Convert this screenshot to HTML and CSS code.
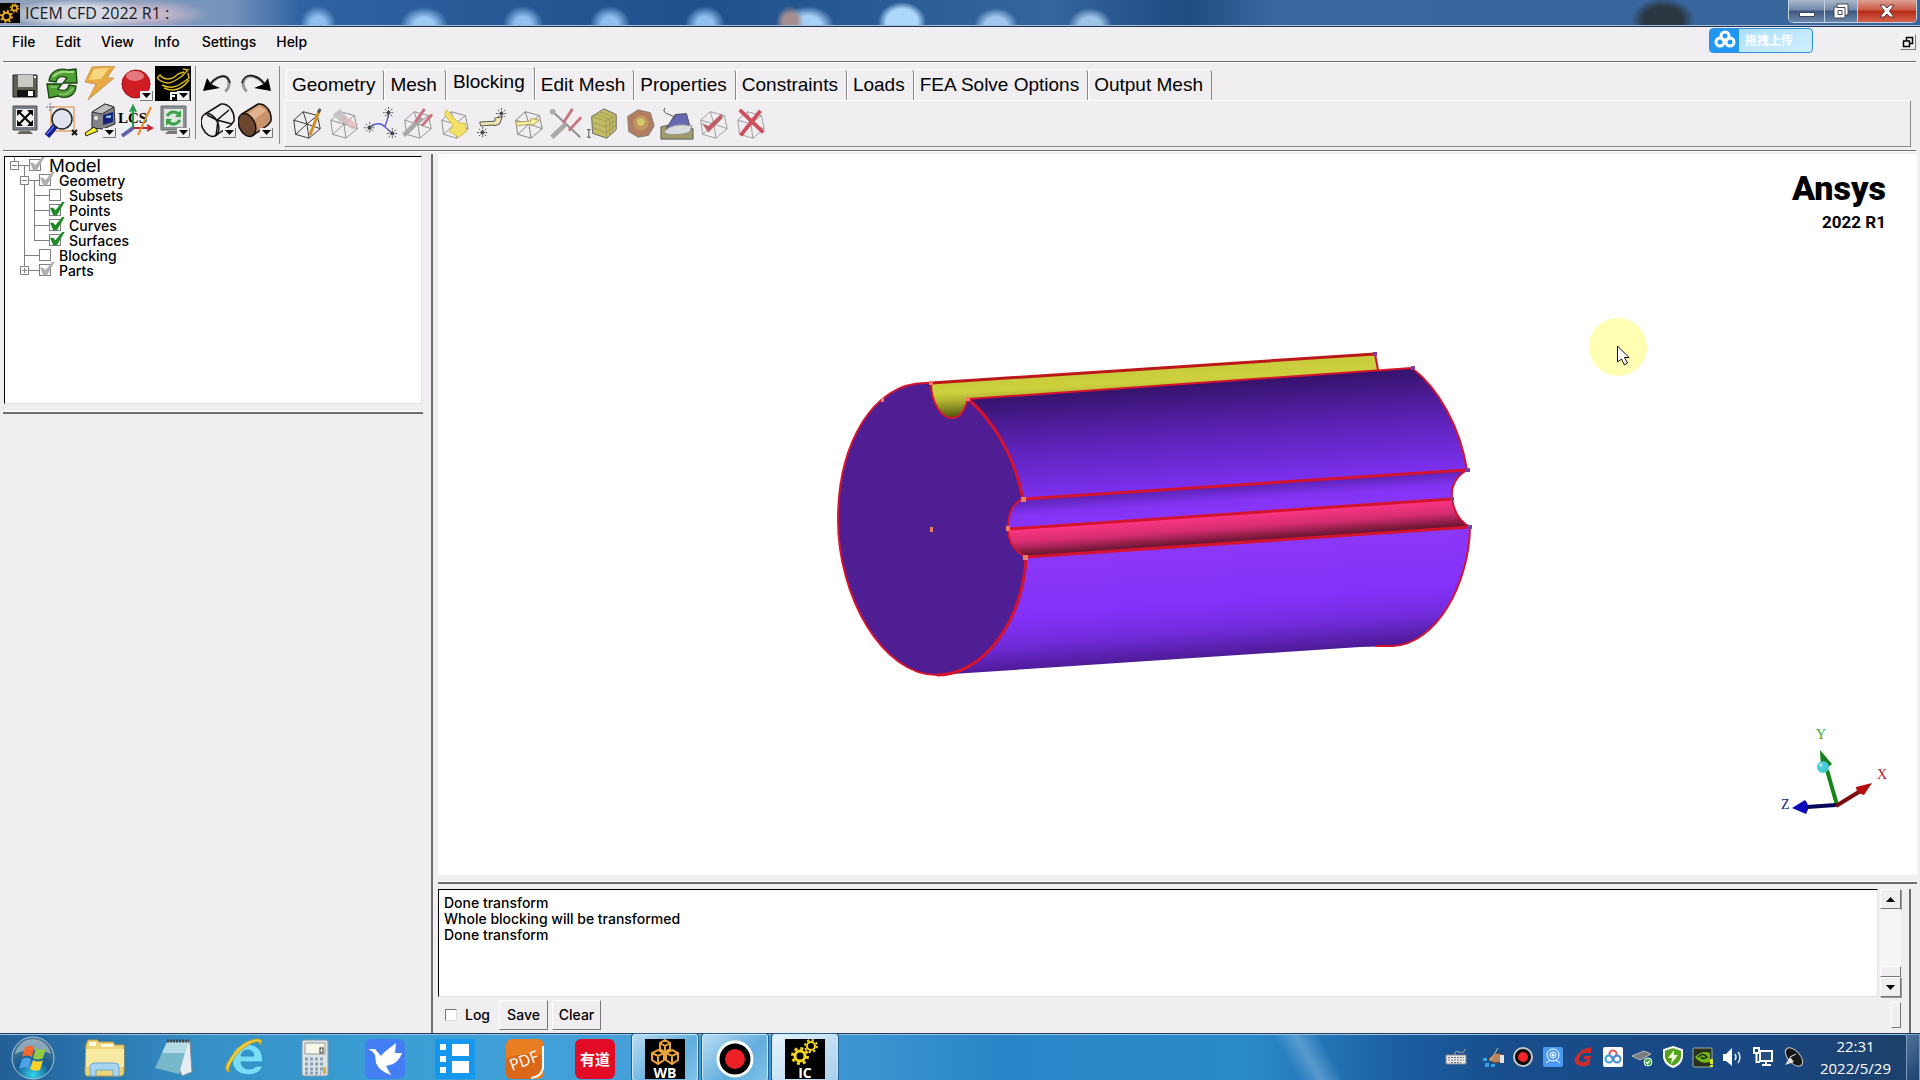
FILE: index.html
```html
<!DOCTYPE html>
<html lang="en">
<head>
<meta charset="utf-8">
<title>ICEM CFD 2022 R1</title>
<link rel="stylesheet" href="styles.css">
</head>
<body>
<svg class="defs" aria-hidden="true">
  <symbol id="drop" viewBox="0 0 13 10"><path d="M0 0H13V10H0Z" fill="#f0eef0"/><path d="M0 9.500H12.500V0" fill="none" stroke="#777"/><path d="M2 2H11L6.500 7Z" fill="#000"/></symbol>
  <symbol id="hex" viewBox="0 0 36 36"><path d="M14 5L29 9L32 23L20 33L6 29L4 14ZM18 18L14 5M18 18L29 9M18 18L32 23M18 18L20 33M18 18L6 29M18 18L4 14" fill="none" stroke="currentColor"/></symbol>
  <symbol id="star" viewBox="0 0 12 12"><path d="M6 0V12M0 6H12M2 2L10 10M10 2L2 10" stroke="#222" stroke-dasharray="2 1"/><circle cx="6" cy="6" r="2" fill="#222"/></symbol>
  <symbol id="gears" viewBox="0 0 20 20"><path d="M0 0H20V20H0Z" fill="#0a0702"/><g fill="none" stroke="#e5a823"><circle cx="6.500" cy="13.500" r="3.800" stroke-width="2"/><circle cx="6.500" cy="13.500" r="5.500" stroke-width="2" stroke-dasharray="2 2.300"/><circle cx="14.500" cy="5" r="2.600" stroke-width="1.600"/><circle cx="14.500" cy="5" r="4" stroke-width="1.500" stroke-dasharray="1.600 1.500"/></g></symbol>
</svg>

<header class="titlebar">
  <svg class="app-icon" aria-hidden="true"><use href="#gears"/></svg>
  <h1>ICEM CFD 2022 R1 :</h1>
  <div class="window-buttons">
    <button class="win min" aria-label="Minimize"><svg width="18" height="14"><path d="M1.500 8.500H16.500V12.500H1.500Z" fill="#fff" stroke="#445"/></svg></button>
    <button class="win max" aria-label="Restore"><svg width="18" height="18"><path d="M5 2H16V13H13V16H2V5H5Z" fill="#fff" stroke="#445"/><path d="M5 5.500H13V13M6 8.500H10V12.500H6Z" fill="none" stroke="#445"/></svg></button>
    <button class="win close" aria-label="Close"><svg width="18" height="16"><path d="M2 2H6L9 5L12 2H16L11.500 8L16 14H12L9 11L6 14H2L6.500 8Z" fill="#fff" stroke="#534"/></svg></button>
  </div>
</header>

<nav class="menubar" aria-label="Main menu">
  <button>File</button><button>Edit</button><button>View</button><button class="wide">Info</button><button>Settings</button><button>Help</button>
  <button class="cloud">
    <svg width="30" height="24" aria-hidden="true"><g fill="none" stroke="#fff" stroke-width="3"><circle cx="15" cy="8" r="4"/><circle cx="10" cy="14" r="4"/><circle cx="20" cy="14" r="4"/></g></svg>
    <span>拖拽上传</span>
  </button>
  <button class="mdi" aria-label="Restore document"><svg width="12" height="12"><path d="M4 1.500H11M4.500 1V5M10.500 1V7.500H8M1 5H8M1.500 5V10.500H7.500V5" fill="none" stroke="#000" stroke-width="1.500"/></svg></button>
</nav>

<section class="toolbars">
  <div class="tools tools-main">
    <button aria-label="Save"><svg viewBox="0 0 36 36"><path d="M6 9H30V31H6Z" fill="#5f6152" stroke="#222"/><path d="M11 9H26V21H11Z" fill="#c9c9c6"/><path d="M10 24H28V31H10Z" fill="#111"/><path d="M21 25H26V30H21Z" fill="#fff"/><path d="M27 10H29V12H27Z" fill="#fff"/></svg></button>
    <button aria-label="Refresh"><svg viewBox="0 0 36 36"><g fill="#4f9f35" stroke="#16420e" stroke-width="1.300"><path d="M5 15C6 6 14 1 24 4L32 3L33 17L19 17L23 12C17 9 13 11 12 16Z"/><path d="M32 20C32 29 23 34 14 30L5 32L3 18H18L14 23C20 26 24 24 25 19Z"/></g><path d="M9 11Q14 5 24 6L30 6" fill="none" stroke="#a2d88c" stroke-width="2"/><path d="M6 21H13M15 28Q24 30 29 22" fill="none" stroke="#8dcb75" stroke-width="1.500"/></svg></button>
    <button aria-label="Compute"><svg viewBox="0 0 36 36"><path d="M11 1L34 0L26 12H33L7 34L15 18L4 16Z" fill="#e8aa45" stroke="#c89b50"/><path d="M13 3L28 2L20 13L8 14Z" fill="#f8d77f"/></svg></button>
    <button aria-label="Record"><svg viewBox="0 0 36 36"><circle cx="18" cy="18" r="14" fill="#cf1d25" stroke="#991019"/><ellipse cx="17" cy="10" rx="9" ry="5" fill="#e5787c"/><use href="#drop" x="22" y="25" width="13" height="10"/></svg></button>
    <button aria-label="Contours"><svg viewBox="0 0 36 36"><path d="M0 0H36V35H0Z" fill="#000"/><path d="M2 12C12 21 19 16 27 10L33 4L28 3M2 12L5 9C10 15 17 14 23 8L29 6M7 19C17 24 24 20 34 12L33 7M9 22C20 27 28 22 34 14" fill="none" stroke="#d8b919" stroke-width="1.500"/><path d="M16 34V27H22M16 30H20" stroke="#fff" fill="none" stroke-width="2"/><use href="#drop" x="22" y="25" width="13" height="10"/></svg></button>
    <button aria-label="Fit window"><svg viewBox="0 0 36 36"><path d="M6 3H30V27H6Z" fill="#777e85" stroke="#555"/><path d="M9 6H27V24H9Z" fill="#f2f2f2"/><path d="M13 28H23L26 31H10Z" fill="#666"/><path d="M12 9L24 21M24 9L12 21" stroke="#000" stroke-width="2"/><path d="M10 7H16L10 13ZM26 7V13L20 7ZM26 23H20L26 17ZM10 23V17L16 23Z" fill="#000"/></svg></button>
    <button aria-label="Box zoom"><svg viewBox="0 0 36 36"><path d="M7 4H30V28H7Z" fill="none" stroke="#e08030"/><path d="M6 0V8M2 4H10" stroke="#6670a0" stroke-dasharray="2 1"/><path d="M12 22L3 33" stroke="#15209a" stroke-width="6"/><path d="M11 22L3 31" stroke="#b4bdff"/><circle cx="18" cy="16" r="10" fill="#dfe3ee" stroke="#222" stroke-width="1.500"/><path d="M28 27L33 32M33 27L28 32" stroke="#111" stroke-width="2"/></svg></button>
    <button aria-label="Measure"><svg viewBox="0 0 36 36"><path d="M11 9L24 1L33 4L34 21L22 26L11 25Z" fill="#858585" stroke="#222"/><path d="M11 9L24 1L33 4L21 11Z" fill="#bfbfbf" stroke="#333"/><path d="M22 12L32 9V19L22 22Z" fill="#13237a"/><path d="M25 13L30 12V15H25Z" fill="#8bb7e0"/><circle cx="15" cy="15" r="2" fill="#e8e8e8"/><path d="M13 24L4 30L5 33L17 28Z" fill="#f2ec2a" stroke="#222"/><use href="#drop" x="22" y="25" width="13" height="10"/></svg></button>
    <button aria-label="Local coordinate system"><svg viewBox="0 0 36 36"><text x="0" y="20" class="lcs">LCS</text><path d="M15 25V5M12 9L15 3L18 9" stroke="#259a4c" stroke-width="2" fill="none"/><path d="M15 25H33M29 22L34 25L29 28" stroke="#bf2733" stroke-width="2" fill="none"/><path d="M15 25L4 33" stroke="#6265ae" stroke-width="4"/><path d="M33 4L20 32" stroke="#e19028" stroke-width="2"/></svg></button>
    <button aria-label="Refresh display"><svg viewBox="0 0 36 36"><path d="M6 3H31V27H6Z" fill="#8b9095" stroke="#666"/><path d="M9 6H28V24H9Z" fill="#dfe6df"/><path d="M13 28H23L26 31H10Z" fill="#777"/><path d="M12 13Q17 6 24 11M25 17Q20 24 13 19" stroke="#3aa348" stroke-width="3" fill="none"/><path d="M26 7V14H20ZM11 23V16H17Z" fill="#3aa348"/><use href="#drop" x="22" y="25" width="13" height="10"/></svg></button>
  </div>
  <div class="tools tools-view">
    <button aria-label="Undo"><svg viewBox="0 0 36 36"><path d="M7 22C15 8 29 6 28 19Q27 24 24 25" fill="none" stroke="#999" stroke-width="3"/><path d="M7 22C14 9 27 6 29 17" fill="none" stroke="#111" stroke-width="1.500"/><path d="M2 25L6 12L10 18L19 22Z" fill="#000"/></svg></button>
    <button aria-label="Redo"><svg viewBox="0 0 36 36"><path d="M29 22C21 8 6 6 5 18Q6 24 9 25" fill="none" stroke="#999" stroke-width="3"/><path d="M29 22C21 7 6 6 4 17" fill="none" stroke="#111" stroke-width="1.500"/><path d="M33 25L30 12L26 18L16 22Z" fill="#000"/></svg></button>
    <button aria-label="Wireframe display"><svg viewBox="0 0 36 36"><g fill="none" stroke="#111" stroke-width="1.500"><ellipse cx="9" cy="22" rx="8" ry="12" transform="rotate(-25 9 22)"/><path d="M4 11L20 1C28 0 34 9 33 18L30 22L14 33M6 12L16 17L28 7M17 17L15 33M16 17L31 21"/></g><use href="#drop" x="22" y="25" width="13" height="10"/></svg></button>
    <button aria-label="Solid display"><svg viewBox="0 0 36 36"><path d="M4 11L20 1C28 0 34 9 33 18L30 22L14 33Z" fill="#c8926a" stroke="#111" stroke-width="1.500"/><path d="M8 12L22 3L28 8L14 18Z" fill="#e0b48e"/><ellipse cx="9" cy="22" rx="8" ry="12" transform="rotate(-25 9 22)" fill="#6e452d" stroke="#111" stroke-width="1.500"/><use href="#drop" x="22" y="25" width="13" height="10"/></svg></button>
  </div>
  <div class="tabs">
    <div class="tablist" role="tablist">
      <button role="tab">Geometry</button><button role="tab">Mesh</button><button role="tab" class="active" aria-selected="true">Blocking</button><button role="tab">Edit Mesh</button><button role="tab">Properties</button><button role="tab">Constraints</button><button role="tab">Loads</button><button role="tab">FEA Solve Options</button><button role="tab">Output Mesh</button>
    </div>
    <div class="tabpanel" role="tabpanel">
      <button aria-label="Create block"><svg viewBox="0 0 36 36"><use href="#hex" width="36" height="36" color="#333"/><path d="M31 4L21 30" stroke="#d18d20" stroke-width="3"/><path d="M32 2L30 6" stroke="#555" stroke-width="3"/></svg></button>
      <button class="dim" aria-label="Split block"><svg viewBox="0 0 36 36"><use href="#hex" width="36" height="36" color="#777"/><path d="M6 8L14 2L22 12L14 16Z" fill="#bbb"/><path d="M15 8L33 18L28 24L18 17Z" fill="#d9a5a9" opacity=".7"/></svg></button>
      <button class="dim" aria-label="Merge vertices"><svg viewBox="0 0 36 36"><path d="M5 22Q16 14 22 21L30 28M22 21Q25 14 26 7" stroke="#3338c4" stroke-width="1.500" fill="none"/><use href="#star" x="0" y="16" width="12" height="12"/><use href="#star" x="20" y="0" width="12" height="12"/><use href="#star" x="24" y="22" width="12" height="12"/></svg></button>
      <button class="dim" aria-label="Edit block"><svg viewBox="0 0 36 36"><use href="#hex" width="36" height="36" color="#777"/><path d="M3 30L22 11" stroke="#999" stroke-width="5"/><path d="M15 16L25 2M22 20L33 8" stroke="#c05560" stroke-width="3"/></svg></button>
      <button class="dim" aria-label="Associate"><svg viewBox="0 0 36 36"><use href="#hex" width="36" height="36" color="#777"/><path d="M9 3L22 17L29 17L30 26L22 32L12 26L16 20L7 8Z" fill="#f5df45" stroke="#cdb023"/></svg></button>
      <button class="dim" aria-label="Move vertex"><svg viewBox="0 0 36 36"><path d="M5 16L21 15V12L29 10L26 18L20 20V19L6 20Z" fill="#efe79f" stroke="#222"/><use href="#star" x="22" y="1" width="12" height="12"/><use href="#star" x="2" y="21" width="12" height="12"/></svg></button>
      <button class="dim" aria-label="Transform blocks"><svg viewBox="0 0 36 36"><use href="#hex" width="36" height="36" color="#666"/><path d="M4 16L20 15V12L29 14L21 20V18L5 20Z" fill="#f7ef8d" stroke="#998f30"/></svg></button>
      <button class="dim" aria-label="Edit edge"><svg viewBox="0 0 36 36"><path d="M3 4L33 32" stroke="#777" stroke-width="2"/><path d="M3 32L18 18" stroke="#999" stroke-width="5"/><path d="M15 17L25 2M21 25L34 11" stroke="#c05560" stroke-width="3"/><circle cx="4" cy="5" r="3" fill="#999"/></svg></button>
      <button class="dim" aria-label="Pre-mesh params"><svg viewBox="0 0 36 36"><path d="M6 10L19 2L32 8V24L22 33L7 28Z" fill="#b7b043" stroke="#444"/><path d="M6 10L21 15L32 8M21 15L22 33M10 8L25 13V30M14 5L28 10V27M6 16L21 21L32 14M7 22L21 27L32 19" stroke="#8a8430" fill="none"/><path d="M3 24V32M1 24H5M1 32H5" stroke="#222"/></svg></button>
      <button class="dim" aria-label="Mesh quality"><svg viewBox="0 0 36 36"><path d="M5 10L16 3L29 6L33 20L27 30L16 32L6 26Z" fill="#a4613f" stroke="#665"/><circle cx="19" cy="17" r="8" fill="#b3823c"/><circle cx="19" cy="16" r="4" fill="#cfc04d"/></svg></button>
      <button class="dim" aria-label="Smooth"><svg viewBox="0 0 36 36"><path d="M1 21L14 18L35 23V34H1Z" fill="#8c8a48" stroke="#333"/><path d="M7 22L16 8L28 7L32 22L21 27L7 27Z" fill="#4547a6" stroke="#222"/><path d="M5 25Q15 16 34 20L31 27Q16 31 5 28Z" fill="#d8d8dc" stroke="#777"/><path d="M16 11L10 8Q2 6 5 1" stroke="#222" fill="none"/></svg></button>
      <button class="dim" aria-label="Check blocks"><svg viewBox="0 0 36 36"><use href="#hex" width="36" height="36" color="#888"/><path d="M5 17L12 20L26 7L27 12L12 27Z" fill="#b43b48"/></svg></button>
      <button class="dim" aria-label="Delete block"><svg viewBox="0 0 36 36"><use href="#hex" width="36" height="36" color="#888"/><path d="M6 3L31 27M28 4L7 30" stroke="#c42837" stroke-width="4"/></svg></button>
    </div>
  </div>
</section>

<main class="workspace">
  <aside class="side">
    <ul class="tree">
      <li class="root"><svg width="24" height="15"><path d="M9.500 0V4M5.500 4.500H13.500V12.500H5.500ZM7 8.500H12M14 8.500H24M19.500 8V15"/></svg><input type="checkbox" id="t1" class="partial" checked><label for="t1">Model</label></li>
      <li><svg width="34" height="15"><path d="M19.500 0V4M15.500 4.500H23.500V12.500H15.500ZM17 8.500H22M24 8.500H34M29.500 8V15M19.500 13V15"/></svg><input type="checkbox" id="t2" class="partial" checked><label for="t2">Geometry</label></li>
      <li><svg width="44" height="15"><path d="M19.500 0V15M29.500 0V15M30 8.500H44"/></svg><input type="checkbox" id="t3"><label for="t3">Subsets</label></li>
      <li><svg width="44" height="15"><path d="M19.500 0V15M29.500 0V15M30 8.500H44"/></svg><input type="checkbox" id="t4" checked><label for="t4">Points</label></li>
      <li><svg width="44" height="15"><path d="M19.500 0V15M29.500 0V15M30 8.500H44"/></svg><input type="checkbox" id="t5" checked><label for="t5">Curves</label></li>
      <li><svg width="44" height="15"><path d="M19.500 0V15M29.500 0V8M29 8.500H44"/></svg><input type="checkbox" id="t6" checked><label for="t6">Surfaces</label></li>
      <li><svg width="34" height="15"><path d="M19.500 0V15M20 8.500H34"/></svg><input type="checkbox" id="t7"><label for="t7">Blocking</label></li>
      <li><svg width="34" height="15"><path d="M19.500 0V4M15.500 4.500H23.500V12.500H15.500ZM17 8.500H22M19.500 6V11M24 8.500H34"/></svg><input type="checkbox" id="t8" class="partial" checked><label for="t8">Parts</label></li>
    </ul>
    <div class="sash"></div>
  </aside>

  <div class="content">
    <section class="viewport">
      <svg class="scene" viewBox="438 154 1479 721" role="img" aria-label="Cylinder model with two grooves">
        <defs>
          <linearGradient id="gTop" gradientUnits="userSpaceOnUse" x1="1190" y1="384" x2="1197" y2="487"><stop offset="0" stop-color="#36136c"/><stop offset=".5" stop-color="#5d22b8"/><stop offset="1" stop-color="#7c30ee"/></linearGradient>
          <linearGradient id="gLow" gradientUnits="userSpaceOnUse" x1="1240" y1="543" x2="1248" y2="656"><stop offset="0" stop-color="#8b38f8"/><stop offset=".5" stop-color="#8431fa"/><stop offset=".75" stop-color="#722bdc"/><stop offset="1" stop-color="#4b1a92"/></linearGradient>
          <linearGradient id="gGroove" gradientUnits="userSpaceOnUse" x1="1240" y1="485" x2="1242" y2="514"><stop offset="0" stop-color="#5c23b4"/><stop offset=".5" stop-color="#8233f2"/><stop offset="1" stop-color="#8a36ff"/></linearGradient>
          <linearGradient id="gPink" gradientUnits="userSpaceOnUse" x1="1240" y1="514" x2="1242" y2="543"><stop offset="0" stop-color="#fb3684"/><stop offset=".45" stop-color="#d82d70"/><stop offset="1" stop-color="#561129"/></linearGradient>
          <linearGradient id="gYel" gradientUnits="userSpaceOnUse" x1="945" y1="382" x2="947" y2="419"><stop offset="0" stop-color="#c9cc3c"/><stop offset=".3" stop-color="#cdd03e"/><stop offset=".5" stop-color="#b4b632"/><stop offset="1" stop-color="#4b4c0c"/></linearGradient>
        </defs>
        <circle cx="1618" cy="347" r="29" fill="#ffffb4"/>
        <path d="M931 383L1375 354L1378 370L968 399L960 417H943L932 400Z" fill="url(#gYel)"/>
        <path d="M968 399L1412 368C1438 388 1460 426 1467 470L1023 500Z" fill="url(#gTop)"/>
        <path d="M1023 499L1467 470Q1450 480 1452 499L1008 529Q1008 505 1023 499Z" fill="url(#gGroove)"/>
        <path d="M1008 529L1452 499Q1455 519 1470 527L1026 557Q1008 548 1008 529Z" fill="url(#gPink)"/>
        <path d="M1026 557L1470 527C1469 585 1436 644 1393 646L1360 647L937 675Z" fill="url(#gLow)"/>
        <path d="M931 383L925 383C873 383 838 444 838 520C838 596 882 675 937 675C985 675 1024 618 1026 557Q1008 548 1008 529Q1008 505 1023 499C1015 457 993 420 968 399C965 408 962 417 953 418C941 419 931 402 931 383Z" fill="#4e1e92" stroke="#d4152f" stroke-width="2"/>
        <g fill="none" stroke="#d4142f"><path d="M931 383L1375 354" stroke="#bd1819" stroke-width="3"/><path d="M968 399L1412 368M1375 354L1378 370M1412 368C1438 388 1460 426 1467 470Q1450 480 1452 499Q1455 519 1470 527C1469 585 1436 644 1393 646L1375 646" stroke-width="2"/><path d="M1023 499L1467 470M1008 529L1452 499M1026 557L1470 527M937 675C985 675 1024 618 1026 557M1023 499C1015 457 993 420 968 399" stroke-width="3"/></g>
        <path d="M929 381H933V385H929ZM881 398H884V402H881ZM966 397H970V401H966ZM930 527H933V532H930ZM1021 497H1026V502H1021ZM1006 526H1010V531H1006ZM1023 555H1028V560H1023Z" fill="#ea8060"/>
        <path d="M1373 352H1377V356H1373ZM1411 366H1415V370H1411ZM1466 468H1470V472H1466ZM1451 497H1454V501H1451ZM1468 525H1472V529H1468Z" fill="#7a3fae"/>
        <path d="M1617.500 346V362L1621.500 359L1624.500 365L1627.500 363L1624.500 357.500H1629Z" fill="#fff" stroke="#111"/>
        <path d="M1837 805L1827 770" stroke="#16851c" stroke-width="4"/><path d="M1820 750L1832 764Q1827 769 1821 768Z" fill="#118018"/><circle cx="1823" cy="767" r="6" fill="#48c9d3"/><circle cx="1821" cy="765" r="2" fill="#9ce8ec"/>
        <path d="M1836 806L1862 790" stroke="#7d0c0c" stroke-width="4"/><path d="M1872 783L1864 795Q1856 793 1856 787Z" fill="#b30d0d"/>
        <path d="M1836 805L1807 807" stroke="#070758" stroke-width="4"/><path d="M1792 808L1805 800Q1811 806 1806 814Z" fill="#0a0ab8"/>
        <text x="1816" y="739" class="axis axis-y">Y</text><text x="1877" y="779" class="axis axis-x">X</text><text x="1781" y="809" class="axis axis-z">Z</text>
      </svg>
      <div class="brand"><strong>Ansys</strong><span>2022 R1</span></div>
    </section>
    <div class="sash"></div>
    <section class="messages">
      <div class="log">
        <textarea readonly aria-label="Message log">Done transform
Whole blocking will be transformed
Done transform</textarea>
        <div class="scroll"><button aria-label="Scroll up"><svg width="9" height="5"><path d="M0 5L4.500 0L9 5Z"/></svg></button><div class="track"><div class="thumb"></div></div><button aria-label="Scroll down"><svg width="9" height="5"><path d="M0 0L4.500 5L9 0Z"/></svg></button></div>
      </div>
      <div class="actions"><input type="checkbox" id="log"><label for="log">Log</label><button>Save</button><button>Clear</button><div class="grip"></div></div>
    </section>
  </div>
</main>

<footer class="taskbar">
  <button aria-label="Start"><svg width="44" height="44" viewBox="0 0 44 44"><defs><radialGradient id="orb" cx=".5" cy=".9" r=".8"><stop offset="0" stop-color="#35d3ee"/><stop offset=".5" stop-color="#155d92"/><stop offset="1" stop-color="#52768f"/></radialGradient></defs><circle cx="22" cy="22" r="21" fill="url(#orb)" stroke="#a5c4dc"/><path d="M4 18Q8 4 22 3Q36 4 40 18Q22 10 4 18Z" fill="#b5cbd9" opacity=".6"/><path d="M14 11Q19 8 23 11L21 21Q16 18 11 21Z" fill="#ef6a30"/><path d="M25 12Q30 15 35 12L32 22Q27 25 22 22Z" fill="#94ca44"/><path d="M11 23Q16 20 20 23L18 32Q13 30 8 33Z" fill="#4da2e6"/><path d="M22 24Q27 27 32 24L29 34Q24 36 19 33Z" fill="#fbd12e"/></svg></button>
  <button aria-label="File Explorer"><svg width="44" height="44" viewBox="0 0 44 44"><path d="M3 9L5 4H14L16 6H30L32 9H41V36Q41 40 38 40H4Q2 40 2 36Z" fill="#ecd478" stroke="#bd9c43"/><path d="M6 6H13V10H6ZM18 8H30V11H18Z" fill="#fff9df"/><path d="M3 13H41V31H3Z" fill="#f8e9a2"/><path d="M7 40V31Q7 27 12 27H32Q36 27 36 31V40H30V34H13V40Z" fill="#a7d5ef" stroke="#6ca9cc"/></svg></button>
  <button aria-label="Notepad"><svg width="44" height="44" viewBox="0 0 44 44"><path d="M15 6H37L39 36L29 40Z" fill="#e6edf0" stroke="#889"/><path d="M14 6H35L26 38L2 32Z" fill="#79b8cb"/><path d="M14 6H35L32 17L9 17Z" fill="#b4dce4"/><path d="M14 5H36" stroke="#444" stroke-width="3" stroke-dasharray="2 1"/></svg></button>
  <button aria-label="Internet Explorer"><svg width="44" height="44" viewBox="0 0 44 44"><path d="M35 30H40Q36 39 25 39Q9 38 9 23Q10 8 25 8Q40 9 40 26H18Q19 33 26 33Q31 33 33 30ZM18 20H31Q30 14 25 14Q19 14 18 20Z" fill="#7bdcf5" stroke="#1e91c5"/><path d="M7 36Q-2 35 8 21Q18 5 33 3Q41 2 38 9Q37 3 27 8Q15 14 8 27Q4 34 7 36Z" fill="#f0cf3f" stroke="#c29b24"/></svg></button>
  <button aria-label="Calculator"><svg width="44" height="44" viewBox="0 0 44 44"><rect x="9" y="4" width="26" height="36" rx="2" fill="#dbe3e8" stroke="#8497a5"/><path d="M12 7H32V18H12Z" fill="#f6f6e9" stroke="#999"/><rect x="27" y="12" width="3" height="5" fill="none" stroke="#333"/><path d="M12 23H32M12 28H32M12 33H32M12 37H28" stroke="#8aa2b5" stroke-width="3" stroke-dasharray="3 2"/><path d="M30 31H33V38H30Z" fill="#e8a832"/></svg></button>
  <button aria-label="Bird app"><svg width="44" height="44" viewBox="0 0 44 44"><rect x="2" y="3" width="40" height="40" rx="6" fill="#437ef5"/><path d="M5 13L12 13L18 20Q20 17 24 14L33 7L32 17L39 17Q36 25 30 28L23 30L28 39Q16 35 13 27L12 19Q10 15 5 13Z" fill="#fff"/></svg></button>
  <button aria-label="List app"><svg width="44" height="44" viewBox="0 0 44 44"><path d="M2 3H42V43H2Z" fill="#1597ef"/><path d="M7 8H13V14H7ZM7 20H13V26H7ZM7 31H13V37H7ZM19 8H36V20H19ZM19 25H36V37H19Z" fill="#fff"/></svg></button>
  <button aria-label="PDF reader"><svg width="44" height="44" viewBox="0 0 44 44"><rect x="3" y="3" width="38" height="40" rx="6" fill="#e97d22"/><path d="M3 23Q20 15 41 20V34Q36 43 28 43H9Q3 43 3 37Z" fill="#d96717"/><path d="M40 10V32Q38 41 28 42" fill="none" stroke="#fff" stroke-width="2"/><text x="6" y="30" transform="rotate(-20 22 24)" class="pdf">PDF</text></svg></button>
  <button aria-label="Youdao"><svg width="44" height="44" viewBox="0 0 44 44"><rect x="2" y="3" width="40" height="40" rx="6" fill="#e30b25"/><text x="22" y="29" class="youdao">有道</text></svg></button>
  <button class="open" aria-label="Workbench"><svg width="44" height="44" viewBox="0 0 44 44"><path d="M2 3H42V43H2Z" fill="#000"/><path d="M22 4L27 7V13L22 16L17 13V7ZM17 7L22 10L27 7M22 10V16M15 14L21 17V24L15 28L9 24V17ZM9 17L15 20L21 17M15 20V28M29 14L35 17V24L29 28L23 24V17ZM23 17L29 20L35 17M29 20V28" fill="none" stroke="#eaa339" stroke-width="2"/><text x="22" y="42" class="ico">WB</text></svg></button>
  <button class="open" aria-label="Recorder"><svg width="44" height="44" viewBox="0 0 44 44"><circle cx="22" cy="23" r="17" fill="#000" stroke="#fff" stroke-width="3"/><circle cx="22" cy="23" r="10" fill="#eb2127"/></svg></button>
  <button class="open current" aria-label="ICEM CFD"><svg width="44" height="44" viewBox="0 0 44 44"><path d="M2 3H42V43H2Z" fill="#000"/><g fill="none" stroke="#f1d51c"><circle cx="17" cy="20" r="5" stroke-width="3"/><circle cx="17" cy="20" r="7.500" stroke-width="3" stroke-dasharray="3 2.900"/><circle cx="28" cy="10" r="4" stroke-width="2"/><circle cx="28" cy="10" r="6" stroke-width="2" stroke-dasharray="2.300 2.400"/></g><text x="22" y="42" class="ico">IC</text></svg></button>
  <div class="tray">
    <svg viewBox="0 0 24 24"><path d="M2 10H22V19H2Z" fill="#e4e6e8" stroke="#888"/><path d="M4 12.500H20M4 15H20M7 17.500H17" stroke="#777" stroke-dasharray="2 1"/><path d="M11 10Q10 5 15 7T21 4" fill="none" stroke="#aaa"/></svg>
    <svg viewBox="0 0 24 24"><path d="M7 14L15 8L21 9V17L13 18Z" fill="#b9845c" stroke="#543"/><path d="M19 10H23V18H19Z" fill="#e6e6e6"/><path d="M9 16L17 3" stroke="#ccc"/><path d="M2 13H6V16H2ZM4 18H8V22H4ZM10 19H14V22H10Z" fill="#36a5e8"/></svg>
    <svg viewBox="0 0 24 24"><circle cx="12" cy="12" r="9" fill="#060606" stroke="#c8c8c8" stroke-width="2"/><circle cx="12" cy="12" r="5" fill="#f0252b"/></svg>
    <svg viewBox="0 0 24 24"><rect x="2" y="2" width="20" height="20" rx="2" fill="#4b9bf4"/><g fill="none" stroke="#fff"><circle cx="12" cy="10" r="6"/><circle cx="12" cy="10" r="3"/></g><circle cx="12" cy="10" r="1.500" fill="#fff"/><path d="M5 18L9 15M19 18L15 15" stroke="#fff"/></svg>
    <svg viewBox="0 0 24 24"><path d="M20 2Q8 5 9 8H20M8 8Q1 14 5 19Q10 23 18 20L20 11H13V14H16L15 17Q8 18 8 14Q9 9 14 7Z" fill="#cf2d2b"/></svg>
    <svg viewBox="0 0 24 24"><rect x="2" y="2" width="20" height="20" rx="2" fill="#fff"/><g fill="none" stroke-width="2"><circle cx="12" cy="9" r="3.500" stroke="#e1575c"/><circle cx="8" cy="14" r="3.500" stroke="#38a0e8"/><circle cx="16" cy="14" r="3.500" stroke="#4589da"/></g></svg>
    <svg viewBox="0 0 24 24"><path d="M1 11L13 6L20 9L9 15Z" fill="#777c80" stroke="#bbb"/><circle cx="17" cy="17" r="4" fill="#38ab3b" stroke="#fff"/><path d="M15 17L16.500 18.500L19 15.500" stroke="#fff" fill="none" stroke-width="1.500"/></svg>
    <svg viewBox="0 0 24 24"><path d="M12 2L21 5V12Q20 19 12 22Q4 19 3 12V5Z" fill="#53a31d" stroke="#fff" stroke-width="2"/><path d="M13 5L7 13H11L10 19L17 10H13Z" fill="#f4fbd8"/></svg>
    <svg viewBox="0 0 24 24"><rect x="2" y="3" width="19" height="19" rx="1" fill="#26301b" stroke="#a9ad9f"/><path d="M4 12Q11 5 19 8V17Q10 20 4 12Z" fill="#77b71c"/><path d="M7 12Q12 7 16 12Q12 15 10 12" fill="none" stroke="#1a2410" stroke-width="1.500"/><path d="M19 14H22V19H19ZM19 20H22V22H19Z" fill="#d7e933"/></svg>
    <svg viewBox="0 0 24 24"><path d="M2 9H5L11 3V21L5 16H2Z" fill="#fff"/><path d="M14 9Q16 12 14 15M17 7Q21 12 17 18" fill="none" stroke="#e3ebf3" stroke-width="1.500"/></svg>
    <svg viewBox="0 0 24 24"><path d="M9 6H21V16H9Z" fill="#244f7a" stroke="#fff" stroke-width="2"/><path d="M11 20H20M15 16V20" stroke="#fff" stroke-width="2"/><path d="M3 3H8V8H3ZM5.500 8V17H9" fill="none" stroke="#fff" stroke-width="2"/></svg>
    <svg viewBox="0 0 24 24"><ellipse cx="13" cy="12" rx="6" ry="11" transform="rotate(-42 13 12)" fill="#151515" stroke="#ccc"/><path d="M4 20L9 12L13 17Z" fill="#e6e0d8"/><path d="M9 12L15 9" stroke="#eee"/></svg>
  </div>
  <div class="clock"><time>22:31</time><span>2022/5/29</span></div>
  <button class="show-desktop" aria-label="Show desktop"></button>
</footer>
</body>
</html>
```

FILE: styles.css
```css
* { box-sizing: border-box; }

body {
  margin: 0;
  min-height: 100vh;
  display: flex;
  flex-direction: column;
  background: #f0eef0;
  color: #000;
  font: 500 14px/16px Inter, "Liberation Sans", "Noto Sans CJK SC", sans-serif;
}

button {
  font: inherit;
  color: inherit;
  margin: 0;
  padding: 0;
  border: 0;
  background: none;
}

svg { display: block; flex: none; }
.defs { position: absolute; width: 0; height: 0; }

/* title bar */
.titlebar {
  height: 27px;
  display: flex;
  align-items: flex-start;
  border-bottom: 1px solid #1d3558;
  box-shadow: inset 0 -1px #a9bdd6;
  background:
    radial-gradient(ellipse 75px 15px at 80px 14px, #d5d9e4 50%, transparent),
    radial-gradient(ellipse 70px 15px at 140px 14px, #cbb9cc 30%, transparent),
    radial-gradient(ellipse 18px 18px at 318px 24px, #8fc0f0 40%, transparent),
    radial-gradient(ellipse 24px 18px at 424px 25px, #9ccbf6 40%, transparent),
    radial-gradient(ellipse 20px 18px at 523px 24px, #8fc0ee 40%, transparent),
    radial-gradient(ellipse 20px 18px at 610px 24px, #8fc0f0 40%, transparent),
    radial-gradient(ellipse 20px 18px at 705px 24px, #8fc0f0 40%, transparent),
    radial-gradient(ellipse 14px 16px at 790px 22px, #a48f92 50%, transparent),
    radial-gradient(ellipse 26px 20px at 808px 26px, #a9d2f8 50%, transparent),
    radial-gradient(ellipse 24px 20px at 902px 22px, #aed7fc 65%, transparent),
    radial-gradient(ellipse 22px 18px at 996px 26px, #a0c8ee 50%, transparent),
    radial-gradient(ellipse 22px 18px at 1090px 26px, #9dc4e6 50%, transparent),
    radial-gradient(ellipse 32px 22px at 1663px 20px, #2b3640 60%, transparent),
    linear-gradient(90deg, #90a0b8, #7593bb 230px, #2f62a1 300px, #1f508d 700px, #34659e 1050px, #1e4b80 1190px, #3a689e 1270px, #38669c);
}
.app-icon { width: 20px; height: 20px; margin-top: 3px; }
h1 {
  margin: 0 auto 0 5px;
  font: 16px/27px "Open Sans", sans-serif;
  color: #151b26;
}
.window-buttons {
  display: flex;
  height: 23px;
  margin-right: 3px;
  border: 1px solid #c3d0e0;
  border-top: 0;
  border-radius: 0 0 5px 5px;
  overflow: hidden;
}
.win {
  display: grid;
  place-items: center;
  background: linear-gradient(#a9b8cc, #7289a8 45%, #3c5880 50%, #6d88ab);
}
.win + .win { border-left: 1px solid #c3d0e0; }
.min { width: 35px; }
.max { width: 33px; }
.close { width: 59px; background: linear-gradient(#dda093, #cb5a47 45%, #b72b17 50%, #d4614a); }

/* menu bar */
.menubar {
  height: 35px;
  margin: 0 4px 0 3px;
  padding: 0 0 4px 9px;
  display: flex;
  align-items: center;
  gap: 20px;
  border-bottom: 1px solid #6e6c6e;
  box-shadow: 0 1px #fff;
}
.menubar .wide { margin-right: 2px; }
.menubar .cloud {
  display: flex;
  align-items: center;
  width: 104px;
  height: 25px;
  margin: 0 67px 4px auto;
  border: 1px solid #2f8fd8;
  border-radius: 4px;
  background: linear-gradient(90deg, #2196f3 29px, transparent 29px), linear-gradient(160deg, #a5dafc, #d2f1ff);
}
.cloud span {
  padding-left: 5px;
  color: #fff;
  font: bold 12px/18px "Noto Sans CJK SC", sans-serif;
}
.mdi {
  width: 16px;
  height: 16px;
  display: grid;
  place-items: center;
  border: 1px solid;
  border-color: #fff #777 #777 #fff;
}

/* toolbars */
.toolbars {
  height: 89px;
  margin: 0 4px 0 3px;
  padding-top: 4px;
  display: flex;
  align-items: flex-start;
  border-bottom: 1px solid #6e6c6e;
  box-shadow: 0 1px #fff;
}
.tools { display: grid; grid-auto-rows: 36px; row-gap: 1px; }
.tools svg { width: 36px; height: 36px; }
.tools-main {
  grid-template-columns: repeat(5, 37px);
  padding: 0 3px 0 4px;
  border-right: 1px solid #8a888a;
}
.tools-view {
  grid-template-columns: repeat(2, 37px);
  height: 78px;
  margin-left: 3px;
  padding: 0 4px 0 2px;
  border-right: 1px solid #8a888a;
}
.lcs { font: bold 15px "Liberation Serif", serif; }

.tabs { flex: 1; margin: 0 5px 0 4px; }
.tablist {
  display: flex;
  align-items: flex-end;
  height: 34px;
  padding-left: 2px;
}
.tablist button {
  height: 31px;
  padding: 0 8px 0 6px;
  font: 19px/30px "Liberation Sans", sans-serif;
  white-space: nowrap;
  border-top: 1px solid #fff;
  border-right: 1px solid #8a888a;
  border-radius: 2px 4px 0 0;
  box-shadow: inset 1px 0 #fff;
}
.tablist .active { height: 34px; padding: 0 9px 3px 7px; }
.tabpanel {
  height: 47px;
  padding-left: 3px;
  display: flex;
  align-items: center;
  border: 1px solid;
  border-color: #fff #8a888a #8a888a #fff;
}
.tabpanel button { width: 37px; }
.tabpanel svg { width: 34px; height: 34px; margin: auto; }
.dim { opacity: .8; }

/* workspace */
.workspace { flex: 1; display: flex; padding: 3px 3px 0 3px; }
.side {
  width: 430px;
  flex: none;
  padding: 2px 8px 0 0;
  border-right: 2px solid #6e6c6e;
}
.tree {
  height: 248px;
  margin: 0 1px;
  padding: 0;
  list-style: none;
  background: #fff;
  border: 1px solid;
  border-color: #000 #e3e1e3 #e3e1e3 #000;
}
.tree li { display: flex; align-items: center; height: 15px; }
.tree li svg path { fill: none; stroke: #808080; }
.tree input { margin-top: 2px; border: 1px solid #808080; }
.tree label { padding: 1px 0 0 8px; line-height: 15px; }
.tree .root label { font: 19px/15px "Liberation Sans", sans-serif; }
input[type="checkbox"] {
  appearance: none;
  flex: none;
  width: 12px;
  height: 12px;
  margin: 0;
  background: #fff;
  position: relative;
}
.tree input:checked::after {
  content: "";
  position: absolute;
  left: 0;
  top: -3px;
  width: 15px;
  height: 14px;
  background: #1f8a28;
  clip-path: polygon(0 45%, 22% 45%, 36% 62%, 84% 0, 100% 0, 45% 100%, 22% 100%);
}
.tree input.partial::after { background: #b0aeb0; }
.sash {
  height: 3px;
  border-top: 1px solid #fff;
  border-bottom: 2px solid #6e6c6e;
}
.side .sash { margin-top: 7px; }

.content { flex: 1; min-width: 0; display: flex; flex-direction: column; margin-left: 5px; }
.viewport { flex: 1; position: relative; background: #fff; }
.scene { width: 100%; height: auto; }
.brand {
  position: absolute;
  top: 13px;
  right: 31px;
  display: flex;
  flex-direction: column;
  align-items: flex-end;
  font-family: Roboto, "Liberation Sans", sans-serif;
  font-weight: bold;
}
.brand strong { font-size: 34px; line-height: 42px; }
.brand span { font-size: 17px; line-height: 26px; }
.axis { font: 14px "Liberation Serif", serif; }
.axis-x { fill: #b3202a; }
.axis-y { fill: #31a838; }
.axis-z { fill: #22228c; }

.content > .sash { margin: 6px 0 5px; }
.messages { margin-right: 6px; padding-right: 8px; border-right: 2px solid #6e6c6e; }
.log { display: flex; gap: 2px; height: 108px; }
textarea {
  flex: 1;
  display: block;
  padding: 5px;
  resize: none;
  overflow: hidden;
  font: inherit;
  color: inherit;
  border: 1px solid;
  border-color: #000 #e3e1e3 #e3e1e3 #000;
  outline: 0;
  background: #fff;
}
.scroll { width: 21px; display: flex; flex-direction: column; }
.scroll button, .thumb, .grip, .actions button {
  border: 1px solid;
  border-color: #fff #777 #777 #fff;
  background: #f0eef0;
}
.scroll button { height: 20px; display: grid; place-items: center; box-shadow: 1px 1px #999; }
.track { flex: 1; display: flex; flex-direction: column; justify-content: flex-end; background: #f6f5f6; }
.thumb { height: 11px; }
.actions { display: flex; align-items: center; height: 36px; padding: 0 0 0 7px; }
.actions input { border: 1px solid; border-color: #777 #ddd #ddd #777; }
.actions label { width: 42px; padding-left: 8px; }
.actions button { width: 49px; height: 30px; margin-right: 4px; }
.grip { width: 10px; height: 26px; margin-left: auto; }

/* task bar */
.taskbar {
  height: 48px;
  display: flex;
  border-top: 1px solid #1c3d60;
  box-shadow: inset 0 1px #9cc3e0;
  background:
    linear-gradient(60deg, transparent 1125px, #8fc2e477 1145px, transparent 1165px),
    linear-gradient(90deg, #235f96, #2a75ad 90px, #3590c6 200px, #3b9fd4 400px, #459fd8 620px, #3d96d3 840px, #2a86c8 1000px, #2b8aca 1250px, #1b5ea2 1400px, #184e8c 1500px, #194783 1750px, #1d4069);
}
.taskbar > button { width: 70px; display: grid; place-items: center; }
.taskbar > button:first-child { padding-right: 4px; }
.taskbar > .open {
  width: 66px;
  margin: 0 2px;
  border: 1px solid #cfe7f6;
  border-radius: 3px;
  background: linear-gradient(135deg, #b9dcf3, #62aede 60%, #7fc2e8);
  box-shadow: 0 0 0 1px #24608f;
}
.taskbar > .current { background: linear-gradient(135deg, #e7f3fc, #a9d0ec); }
.pdf { font: 16px "Open Sans", sans-serif; fill: #fff; }
.youdao { font: bold 15px "Noto Sans CJK SC", sans-serif; fill: #fff; text-anchor: middle; }
.ico { font: bold 14px "Open Sans", sans-serif; fill: #fff; text-anchor: middle; }
.tray { display: flex; align-items: center; gap: 6px; margin: 0 0 2px auto; }
.tray svg { width: 24px; height: 24px; }
.tray svg:first-child { margin-right: 7px; }
.clock {
  width: 101px;
  padding-bottom: 2px;
  display: flex;
  flex-direction: column;
  align-items: center;
  justify-content: center;
  font: 15px/22px "Open Sans", sans-serif;
  color: #fff;
}
.taskbar > .show-desktop {
  width: 14px;
  border: 1px solid #7d9bbb;
  background: linear-gradient(135deg, #50739b, #1d4170);
}
```
